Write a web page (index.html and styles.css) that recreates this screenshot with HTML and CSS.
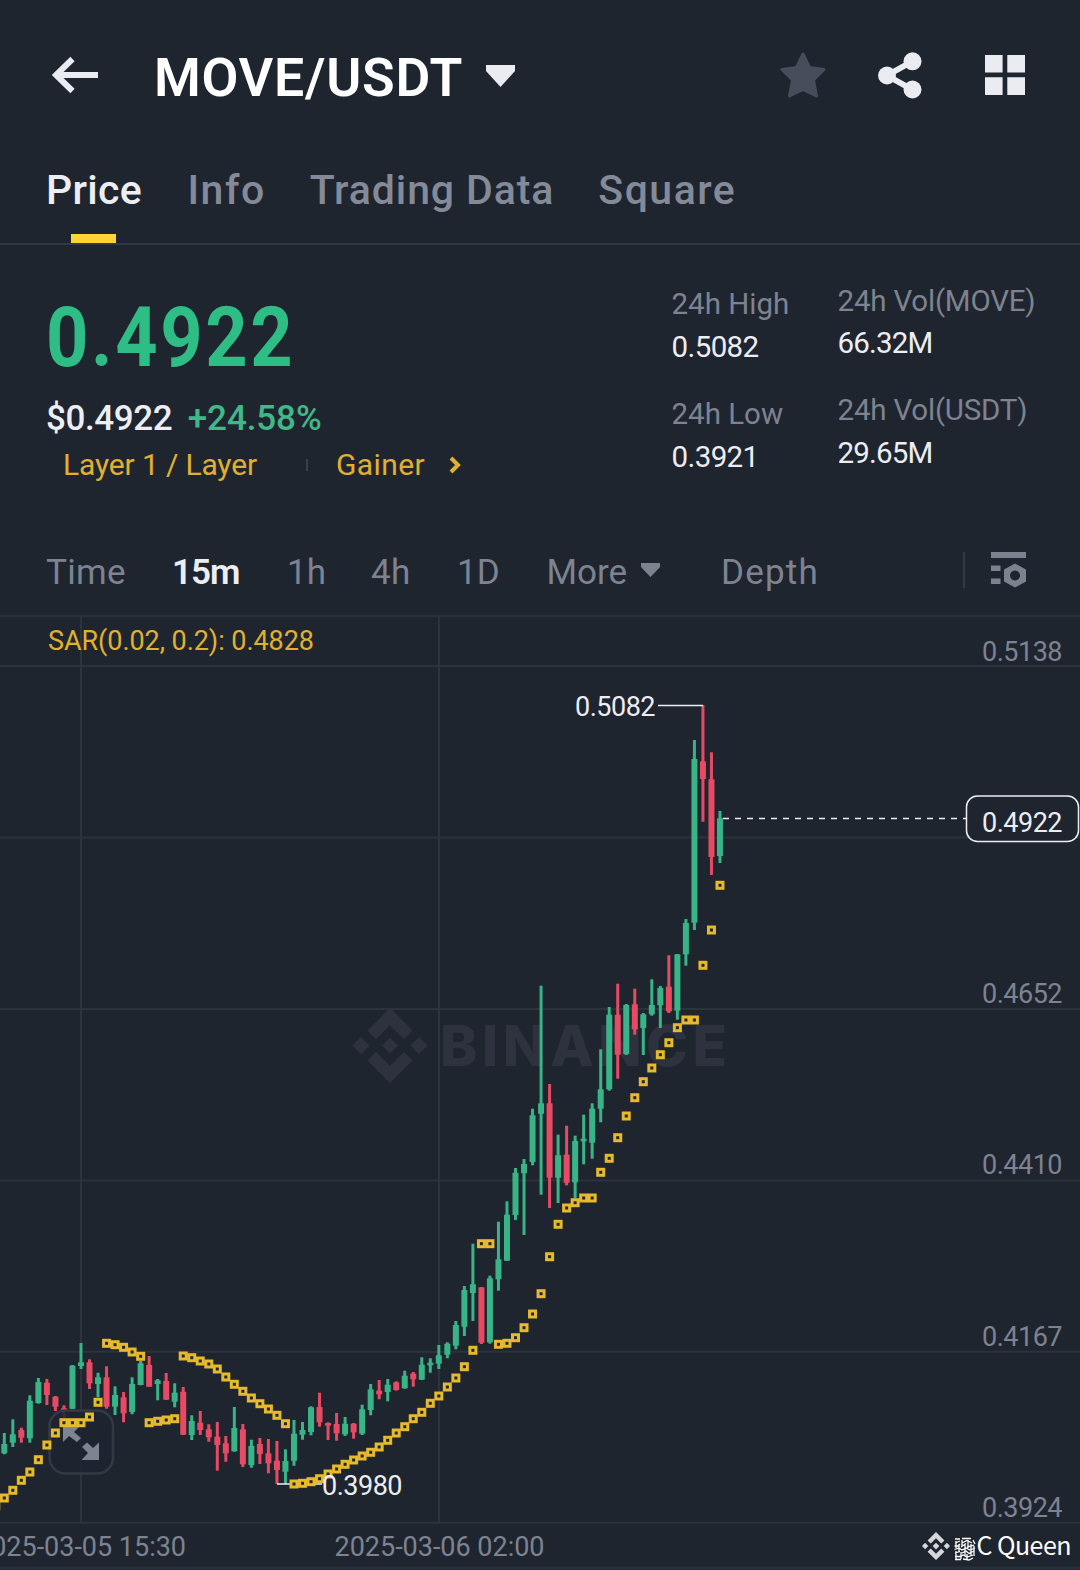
FILE: index.html
```html
<!DOCTYPE html>
<html lang="en">
<head>
<meta charset="utf-8">
<title>MOVE/USDT</title>
<link rel="stylesheet" href="styles.css">
</head>
<body>
<div class="app">
  <header class="header">
    <svg class="back" width="46" height="38" viewBox="0 0 46 38"><path d="M20.500 3L4 19l16.500 16M4.500 19H46" fill="none" stroke="#eaecf2" stroke-width="6"/></svg>
    <h1 class="pair">MOVE/USDT</h1>
    <svg class="pair-caret" width="29" height="22" viewBox="0 0 29 22"><path d="M0 0H29V6L14.500 22L0 6Z" fill="#eaecf2"/></svg>
    <div class="actions">
      <svg width="46" height="48" viewBox="0 0 46 48"><path d="M23 3L29.500 16.500L44 18.500L33.500 29L36.500 45L23 38.500L9.500 45L12.500 29L2 18.500L16.500 16.500Z" fill="#474d5a" stroke="#474d5a" stroke-width="3" stroke-linejoin="round"/></svg>
      <svg width="44" height="47" viewBox="0 0 44 47"><path d="M35 9L9 23.500L35 38" fill="none" stroke="#eaecf2" stroke-width="6"/><circle cx="34.500" cy="9.300" r="9" fill="#eaecf2"/><circle cx="9" cy="23.500" r="9" fill="#eaecf2"/><circle cx="34.500" cy="37.500" r="9" fill="#eaecf2"/></svg>
      <svg width="40" height="40" viewBox="0 0 40 40"><path d="M0 0H17.600V17.600H0ZM22.300 0H40V17.600H22.300ZM0 22.300H17.600V40H0ZM22.300 22.300H40V40H22.300Z" fill="#eaecf2"/></svg>
    </div>
  </header>

  <nav class="tabs">
    <a class="tab tab-active">Price</a>
    <a class="tab tab-info">Info</a>
    <a class="tab tab-trading">Trading Data</a>
    <a class="tab tab-square">Square</a>
  </nav>

  <section class="summary">
    <div class="quote">
      <div class="price">0.4922</div>
      <div class="change"><span class="fiat">$0.4922</span><span class="percent">+24.58%</span></div>
      <div class="tags">
        <span class="tag-layer">Layer 1 / Layer</span>
        <i class="tag-divider"></i>
        <span class="tag-gainer">Gainer</span>
        <svg width="12" height="18" viewBox="0 0 12 18"><path d="M2 2L9 9L2 16" fill="none" stroke="#e0b12f" stroke-width="4"/></svg>
      </div>
    </div>
    <dl class="stats stats-range">
      <dt class="label-high">24h High</dt><dd>0.5082</dd>
      <dt class="label-low">24h Low</dt><dd>0.3921</dd>
    </dl>
    <dl class="stats stats-volume">
      <dt class="label-vol">24h Vol(MOVE)</dt><dd>66.32M</dd>
      <dt class="label-vol">24h Vol(USDT)</dt><dd>29.65M</dd>
    </dl>
  </section>

  <nav class="intervals">
    <a class="iv iv-time">Time</a>
    <a class="iv iv-15m">15m</a>
    <a class="iv iv-1h">1h</a>
    <a class="iv iv-4h">4h</a>
    <a class="iv iv-1d">1D</a>
    <a class="iv iv-more">More</a>
    <svg class="more-caret" width="19" height="14" viewBox="0 0 19 14"><path d="M0 0H19V4L9.500 14L0 4Z" fill="#7d8290"/></svg>
    <a class="iv iv-depth">Depth</a>
    <i class="iv-divider"></i>
    <svg class="settings" width="36" height="38" viewBox="0 0 36 38"><path d="M0 1H35V7H0ZM0 14.500H9.500V20H0ZM0 27.500H9.500V33H0Z" fill="#7d8290"/><path fill-rule="evenodd" d="M24 12.500L35 18.500V30.500L24 36.500L13 30.500V18.500ZM24 19.500a5 5 0 1 0 .01 0Z" fill="#7d8290"/></svg>
  </nav>

  <svg class="chart" width="1080" height="955" viewBox="0 615 1080 955">
    <g class="grid">
      <path class="edge" d="M0 615.700H1080M0 1568H1080"/>
      <path d="M0 666H1080M0 837.500H1080M0 1009H1080M0 1180.500H1080M0 1351.700H1080M0 1522.700H1080M81 617V1522M439 617V1522"/>
    </g>
    <g class="watermark">
      <g transform="translate(390 1045.500)"><path d="M0 -37.500L22.500 -15L14 -6.500L0 -20.500L-14 -6.500L-22.500 -15ZM0 37.500L22.500 15L14 6.500L0 20.500L-14 6.500L-22.500 15ZM0 -8L8 0L0 8L-8 0ZM-29 -8.500L-20.500 0L-29 8.500L-37.500 0ZM29 -8.500L37.500 0L29 8.500L20.500 0Z"/></g>
      <text class="brand" x="440" y="1066" textLength="287">BINANCE</text>
    </g>
    <text class="sar-label" x="48" y="650" textLength="266">SAR(0.02, 0.2): 0.4828</text>
    <g class="axis">
      <text x="982" y="661" textLength="80.500">0.5138</text>
      <text x="982" y="1003" textLength="80.500">0.4652</text>
      <text x="982" y="1174" textLength="80.500">0.4410</text>
      <text x="982" y="1346" textLength="80.500">0.4167</text>
      <text x="982" y="1517" textLength="80.500">0.3924</text>
      <text x="-24" y="1556" textLength="210">2025-03-05 15:30</text>
      <text x="334.500" y="1556" textLength="210">2025-03-06 02:00</text>
    </g>
    <g id="candles"></g>
    <g class="expand">
      <rect x="49.500" y="1410.500" width="63.500" height="63" rx="16"/>
      <path d="M63 1426H80L74 1432L81 1438L77 1442L69 1436L63 1442ZM99 1460V1442.500L93 1448L87 1442.500L82 1447L88 1453L81.500 1460Z"/>
    </g>
    <path class="marker" d="M658 705.500H703M277 1484H322"/>
    <g id="sar"></g>
    <text class="value" x="575" y="716" textLength="80.500">0.5082</text>
    <text class="value" x="322" y="1495" textLength="80.500">0.3980</text>
    <path class="last-line" d="M723 818.500H966"/>
    <rect class="last-box" x="966.500" y="796" width="112" height="45.500" rx="11"/>
    <text class="value" x="982" y="832" textLength="80.500">0.4922</text>
    <g class="credit">
      <g transform="translate(936 1546) scale(.375)"><path d="M0 -37.500L22.500 -15L14 -6.500L0 -20.500L-14 -6.500L-22.500 -15ZM0 37.500L22.500 15L14 6.500L0 20.500L-14 6.500L-22.500 15ZM0 -9L9 0L0 9L-9 0ZM-29 -8.500L-20.500 0L-29 8.500L-37.500 0ZM29 -8.500L37.500 0L29 8.500L20.500 0Z"/></g>
      <path class="seal" d="M955 1539H960M962 1538.500H971M973 1540L975 1544M955 1543L960 1541M962 1543L967 1540.500L972 1543M954.500 1546H958L960 1544M961 1547L966 1543.500M967 1547L974 1545M954.500 1549.500L959 1548L962 1550L966 1548L970 1550L975 1548M955 1553L960 1551.500M962 1553L966 1551L969 1553.500L974 1551M955 1556.500H960L963 1555L967 1557L973 1555M955 1559.500H961M963 1559L969 1560L973 1558M956 1541V1548M959 1544V1552M962 1540V1546M965 1545V1556M968 1540V1548M971 1544V1556M974 1546V1556M956 1551V1560M961 1552V1559M967 1554V1560"/>
      <text x="976.500" y="1555" textLength="95">C Queen</text>
    </g>
  </svg>
</div>
<script src="chart.js"></script>
</body>
</html>
```
FILE: styles.css
```css
* { box-sizing: border-box; margin: 0; padding: 0; }
body {
  background: #1f252f;
  color: #eceef4;
  font-family: Roboto, "Liberation Sans", sans-serif;
}
svg { display: block; flex: none; }
.app { width: 1080px; height: 1570px; overflow: hidden; display: flex; flex-direction: column; }
.header { height: 150px; padding: 0 55px 0 52px; display: flex; align-items: center; flex: none; }
.pair { margin: 5px 0 0 56px; width: 312px; font-size: 53.5px; font-weight: 600; line-height: 60px; letter-spacing: .75px; color: #fff; white-space: nowrap; }
.pair-caret { margin: 2px 0 0 20px; }
.actions { margin-left: auto; display: flex; align-items: center; gap: 51.5px; }
.actions svg:last-child { margin-left: 12px; }

.tabs { height: 95px; padding: 15px 0 0 46px; display: flex; gap: 45.5px; border-bottom: 2px solid #323843; flex: none; }
.tab { position: relative; height: 78px; font-size: 41px; font-weight: 500; line-height: 50px; color: #848a97; white-space: nowrap; }
.tab-active { color: #eceef4; letter-spacing: .3px; }
.tab-active::after { content: ""; position: absolute; left: 25px; bottom: 0; width: 45px; height: 9px; background: #fcd535; }
.tab-info { letter-spacing: 1.5px; }
.tab-trading { letter-spacing: .9px; margin-left: -1.5px; }
.tab-square { letter-spacing: 1.5px; margin-left: -1.5px; }

.summary { height: 285px; padding-left: 46px; display: grid; grid-template-columns: 625px 166px 1fr; flex: none; }
.quote { padding-top: 51px; }
.price { font-size: 84px; font-weight: 700; line-height: 84px; letter-spacing: 3px; color: #2ebd85; transform: scaleX(.88); transform-origin: 0 0; }
.change { margin-top: 17px; display: flex; gap: 15.5px; font-size: 35px; font-weight: 500; line-height: 44px; letter-spacing: -.4px; }
.percent { color: #40b888; letter-spacing: -.1px; }
.tags { margin-top: 4px; padding-left: 17px; height: 40px; display: flex; align-items: center; font-size: 30px; line-height: 40px; color: #e0b12f; }
.tag-layer { width: 243px; letter-spacing: -.15px; }
.tag-divider { width: 2px; height: 12px; background: #3a404b; }
.tag-gainer { margin-left: 28px; width: 113px; letter-spacing: .4px; }
.stats { font-size: 29.5px; line-height: 40px; }
.stats dt { color: #7d8390; }
.stats dd { margin-top: 3px; color: #eceef4; letter-spacing: -.6px; }
.stats dd + dt { margin-top: 27px; }
.stats-range { padding-top: 39px; padding-left: .5px; }
.stats-volume { padding-top: 36px; padding-left: .5px; }
.stats-volume dd { margin-top: 2px; letter-spacing: -.8px; }
.stats-volume dt + dd:last-child { margin-top: 3px; }
.label-vol { letter-spacing: -.2px; }

.intervals { height: 85px; padding: 0 53px 0 46px; display: flex; align-items: center; font-size: 35px; line-height: 40px; color: #7d8390; flex: none; }
.iv-time { width: 126px; letter-spacing: .3px; }
.iv-15m { width: 115px; font-weight: 600; letter-spacing: -1px; color: #eceef4; }
.iv-1h { width: 84px; }
.iv-4h { width: 86px; letter-spacing: .3px; }
.iv-1d { width: 89.5px; }
.iv-more { width: 94.5px; }
.more-caret { margin-top: -6px; }
.iv-depth { margin-left: 61px; letter-spacing: 1.2px; }
.iv-divider { margin-left: auto; width: 2px; height: 36px; margin-top: -6px; background: #343a45; }
.settings { margin: -5px 0 0 26px; }

.chart text { font-family: Roboto, "Liberation Sans", sans-serif; font-size: 27px; }
.chart .grid path { fill: none; stroke: #2d333d; stroke-width: 2; }
.chart .grid .edge { stroke: #2a303a; stroke-width: 3; }
.watermark { fill: #2e323e; }
.chart .brand { font-family: Inter, sans-serif; font-size: 56.5px; font-weight: 800; }
.sar-label { fill: #e0b12f; }
.axis { fill: #7d8390; }
.up { fill: #38b487; }
.down { fill: #e64b63; }
.expand rect { fill: #1f252f; fill-opacity: .85; stroke: #343a45; stroke-width: 2.500; }
.expand path { fill: #7d8390; }
.marker { fill: none; stroke: #eceef4; stroke-width: 1.500; }
.sar-dot { fill: #1f252f; stroke: #e7b92c; stroke-width: 3; }
.value { fill: #eceef4; }
.last-line { fill: none; stroke: #eceef4; stroke-width: 1.500; stroke-dasharray: 6 6; }
.last-box { fill: #1f252f; stroke: #eceef4; stroke-width: 1.500; }
.credit { fill: #fff; }
.credit g { fill: #d5d7db; }
.chart .credit text { font-family: "Noto Sans CJK SC", "Noto Sans", sans-serif; font-size: 25px; }
.seal { fill: none; stroke: #fff; stroke-width: 1.300; }
```
FILE: chart.js
```js
// One row per candle: direction, high, low, body top, body bottom, SAR.
const rows = `
G 1433 1454.3 1444 1453.3 1498
G 1419.3 1447 1434.3 1442.7 1490.3
R 1427.7 1442.7 1430 1437.7 1480.3
G 1395.3 1442.7 1400.7 1438.3 1472
G 1378 1403.7 1382 1403 1459.7
R 1379 1405 1382.7 1395 1445
R 1396 1411 1396.7 1406.7 1433
R 1405.3 1418 1408.3 1410 1422.7
G 1365 1409.3 1365.7 1408.7 1422.7
G 1343 1369 1362.3 1366 1422.7
R 1359.3 1389 1362.3 1383.3 1417
G 1372.7 1397.3 1377.3 1384 1402.3
R 1366.3 1408.7 1377.3 1406.7 1343.3
G 1386.3 1415 1395 1406.7 1344.7
R 1392 1422.3 1397.3 1413.3 1347.3
G 1377.3 1414.3 1384 1412 1352
G 1361 1385.3 1363.3 1385 1356.3
R 1356 1387 1365 1386.7 1422.7
G 1379 1400.3 1380.3 1384 1421.3
R 1373 1400 1381 1399.7 1420
G 1383.3 1407.3 1392.7 1401.7 1418.7
R 1387 1435 1391.7 1434.7 1356
G 1415.3 1440 1421 1435 1357.7
R 1411 1435 1422.7 1430 1361
R 1424.3 1441.7 1429.3 1437.3 1364
R 1422 1470.7 1436.7 1445 1369
R 1436 1461.7 1443.3 1453.3 1377
G 1407 1451.7 1428 1451.3 1384.3
R 1424 1467 1429.3 1464.3 1391.3
G 1439.7 1467.7 1446 1465 1398
R 1438 1464 1444 1454 1403.7
R 1439 1473.3 1453.3 1463.3 1409
R 1441 1484 1460.7 1470 1415.3
G 1449.3 1484 1461 1471.7 1423.7
G 1420 1465.7 1433.7 1460.7 1484
G 1422 1439.7 1430 1434.7 1483.3
G 1406.3 1435.3 1407.3 1432 1481.7
R 1392.7 1426.7 1407 1422.3 1478.7
R 1422.3 1440 1423 1425.7 1474
R 1413 1440.7 1424 1433.3 1469
G 1417 1436 1423.7 1434.3 1464.3
R 1423 1438.7 1423.7 1432.3 1460
G 1404.7 1435 1409.3 1433.7 1456
G 1384 1415.3 1389.3 1410 1452.3
R 1380 1399.3 1390.7 1394.3 1447
G 1379 1401.3 1384.7 1392 1440.3
R 1381.3 1390.7 1382.3 1390 1433
G 1370.7 1388.7 1375.7 1388.3 1426.7
R 1372 1386.7 1373.7 1379.3 1418.7
G 1357.3 1380 1364.7 1379.7 1412.3
G 1358.3 1372.7 1362.7 1365.3 1403.3
G 1345 1369 1355.3 1363.7 1396
G 1342.3 1358.3 1343.7 1354.7 1387
G 1321 1349.3 1325 1345.7 1378
G 1286 1336 1290 1326.7 1366.7
G 1243.7 1321 1284.3 1293 1350.3
R 1287 1344 1287.3 1342.7 1243.7
G 1275.7 1343.7 1278.3 1342.3 1243.7
G 1221.7 1290.7 1259.3 1279.3 1344.3
G 1201.3 1261 1214.7 1260.7 1343.3
G 1168 1220 1172.7 1215 1337.7
G 1159 1235 1164 1173.3 1327.7
G 1108.7 1165.3 1115.3 1162 1314
G 985.7 1194.7 1103.3 1113.7 1293.7
R 1084 1208 1103.3 1177.7 1256.7
G 1134.7 1203 1155.3 1177.7 1224.3
R 1125.7 1185.3 1154.7 1182.7 1208
G 1135.7 1198 1141 1182.3 1202.7
G 1114.7 1164.3 1138.7 1141.3 1198
G 1103.3 1158.7 1108.7 1142.7 1198
G 1049.3 1122.3 1089.3 1108.7 1172.3
G 1007 1090.7 1014.7 1089.3 1158.3
R 983.7 1078.7 1014.7 1054.7 1137.7
G 1004 1055 1005 1054 1116
R 988.7 1034.7 1004.3 1029.3 1097.7
G 1013 1055 1014.3 1028 1081.7
G 979.3 1015.7 1005 1014.3 1068
G 986 1028 988 1005.3 1054.7
R 955.3 1013 986.7 1011.3 1042.7
G 954 1019.7 954.3 1010.7 1027.7
G 919 965.7 923 954.3 1020
G 740 930 759 922.7 1020
R 705 821.7 761.3 779 965.3
R 752.3 875 779.3 857 930
G 811 863 818.3 856 885.3`.trim().split("\n").map(r => r.split(" "));

const NS = "http://www.w3.org/2000/svg";
const STEP = 8.52, FIRST = 4.3;

function rect(parent, cls, x, y, w, h) {
  const el = document.createElementNS(NS, "rect");
  const attrs = { class: cls, x, y, width: w, height: h };
  for (const k in attrs) el.setAttribute(k, attrs[k]);
  parent.appendChild(el);
}
const candles = document.getElementById("candles");
const sar = document.getElementById("sar");
const dot = (x, y) => rect(sar, "sar-dot", x - 3, y - 3, 6, 6);

dot(FIRST - STEP, 1506);
rows.forEach(([dir, ...values], i) => {
  const [high, low, top, bottom, stop] = values.map(Number);
  const x = FIRST + STEP * i;
  const cls = dir === "G" ? "up" : "down";
  rect(candles, cls, x - 1.5, high, 3, low - high);
  rect(candles, cls, x - 3, top, 6, bottom - top);
  dot(x, stop);
});
```
